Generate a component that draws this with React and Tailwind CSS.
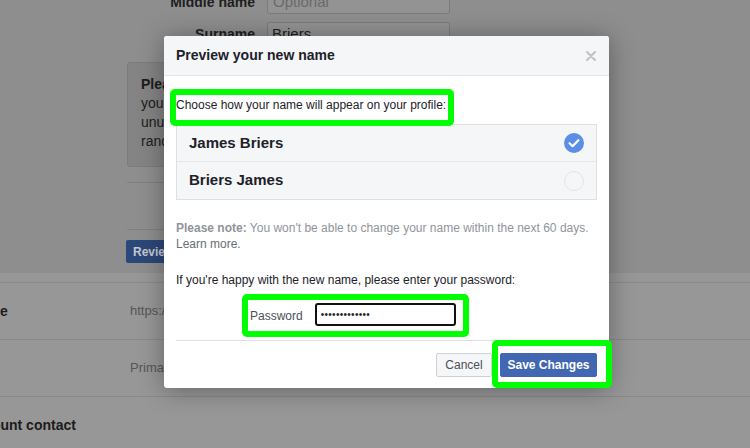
import React from "react";

function CheckedRadio() {
  return (
    <svg width="20" height="20" viewBox="0 0 20 20">
      <circle cx="10" cy="10" r="10" fill="#5b8ee6" />
      <path d="M5.6 10.2l3 3 5.8-6" fill="none" stroke="#fff" strokeWidth="2.2" strokeLinecap="round" strokeLinejoin="round" />
    </svg>
  );
}

function EmptyRadio() {
  return <span className="block w-[20px] h-[20px] rounded-full border-[1.5px] border-[#e3e5e8]" />;
}

function NameOption({ name, checked, last }) {
  return (
    <div className={`flex h-[37px] items-center justify-between pl-[12px] pr-[12px] ${last ? "" : "border-b border-[#e5e6e9]"}`}>
      <span className="text-[15px] font-bold text-[#1d2129]">{name}</span>
      {checked ? <CheckedRadio /> : <EmptyRadio />}
    </div>
  );
}

function Highlight({ className }) {
  // green annotation boxes drawn on top of the screenshot
  return <div className={`absolute border-[6px] border-[#00ff00] rounded-[5px] pointer-events-none ${className}`} />;
}

export default function App() {
  return (
    <div className="relative w-[750px] h-[448px] overflow-hidden bg-[#8e8e8e] font-['Liberation_Sans',Arial,sans-serif]">
      {/* Settings page behind the dimmed overlay */}
      <div className="flex h-[273px] flex-col items-start">
        <div className="-mt-[10px] flex items-center gap-[12px]">
          <span className="w-[255px] text-right text-[14px] font-bold text-[#1e1e1e]">Middle name</span>
          <div className="w-[183px] h-[24px] rounded-[3px] border border-[#7b7b7b] bg-[#939393] px-[5px] text-[15px] leading-[22px] text-[#6a6a6a]">
            Optional
          </div>
        </div>
        <div className="mt-[8px] flex items-center gap-[12px]">
          <span className="w-[255px] text-right text-[14px] font-bold text-[#1e1e1e]">Surname</span>
          <div className="w-[183px] h-[24px] rounded-[3px] border border-[#7b7b7b] bg-[#939393] px-[4px] text-[15px] leading-[22px] text-[#1e1e1e]">
            Briers
          </div>
        </div>
        <div className="ml-[127px] mt-[16px] w-[330px] h-[105px] rounded-[3px] border border-[#7c7c7c] bg-[#848484] px-[13px] pt-[12px] text-[14px] leading-[19px] text-[#1c1c1c]">
          <p className="font-bold">Please note</p>
          <p>you can only change your name</p>
          <p>unusual capitalisation</p>
          <p>random characters</p>
        </div>
        <div className="ml-[127px] mt-[15px] w-[330px] border-t border-[#7f7f7f]" />
        <div className="ml-[127px] mt-[46px] w-[330px] border-t border-[#7f7f7f]" />
        <div className="ml-[126px] mt-[10px] flex h-[23px] items-center rounded-[2px] bg-[#2c4779] px-[7px] text-[12px] font-bold text-[#c5c9d2]">
          Review change
        </div>
      </div>

      <div className="bg-[#979797] pt-[9px] h-[175px]">
        <div className="flex h-[57px] items-center border-t border-[#8a8a8a]">
          <span className="w-[130px] shrink-0 whitespace-nowrap text-[14px] font-bold text-[#1c1c1c]">
            <span className="-ml-[60px] inline-block">Username</span>
          </span>
          <span className="text-[13px] text-[#555]">https://www.facebook.com/james.briers</span>
        </div>
        <div className="flex h-[57px] items-center border-t border-[#8a8a8a]">
          <span className="w-[130px] shrink-0 whitespace-nowrap text-[14px] font-bold text-[#1c1c1c]">
            <span className="-ml-[80px] inline-block">Contact</span>
          </span>
          <span className="text-[13px] text-[#555]">Primary: james@example.com</span>
        </div>
        <div className="flex h-[57px] items-center border-t border-[#8a8a8a]">
          <span className="w-[130px] shrink-0 whitespace-nowrap text-[14px] font-bold text-[#1c1c1c]">
            <span className="-ml-[54px] inline-block">Ad account contact</span>
          </span>
        </div>
      </div>

      {/* Modal */}
      <div className="absolute left-[164px] top-[36px] w-[445px] rounded-[3px] bg-white shadow-[0_2px_26px_rgba(0,0,0,0.35)]">
        <div className="flex h-[40px] items-center justify-between border-b border-[#e5e5e5] bg-[#f5f6f7] rounded-t-[3px] pl-[12px] pr-[13px]">
          <h2 className="text-[14px] font-bold text-[#1d2129]">Preview your new name</h2>
          <svg width="10" height="10" viewBox="0 0 10 10">
            <path d="M1 1l8 8M9 1l-8 8" stroke="#bec2c9" strokeWidth="2" strokeLinecap="round" />
          </svg>
        </div>

        <div className="px-[12px]">
          <p className="pt-[21px] text-[12px] leading-[16px] text-[#1d2129]">
            Choose how your name will appear on your profile:
          </p>
          <div className="mt-[11px] border border-[#dddfe2] bg-[#f5f6f7]">
            <NameOption name="James Briers" checked />
            <NameOption name="Briers James" last />
          </div>

          <p className="mt-[20px] text-[12px] leading-[16px] text-[#90949c]">
            <span className="font-bold">Please note:</span> You won't be able to change your name within the next 60 days.
            <br />
            <span className="text-[#686d76]">Learn more.</span>
          </p>

          <p className="mt-[20px] text-[12px] leading-[16px] text-[#1d2129]">
            If you're happy with the new name, please enter your password:
          </p>

          <div className="mt-[15px] flex items-center gap-[12px] pl-[74px]">
            <span className="pt-[3px] text-[12px] text-[#4b4f56]">Password</span>
            <div className="flex w-[141px] h-[23px] items-center rounded-[3px] border-2 border-[#111] pl-[4px] text-[10px] tracking-[0.3px] text-[#1d2129]">
              •••••••••••••
            </div>
          </div>

          <div className="mt-[14px] border-t border-[#dddfe2]" />
        </div>

        <div className="flex justify-end gap-[8px] px-[12px] pt-[12px] pb-[11px]">
          <button className="h-[24px] w-[56px] rounded-[2px] border border-[#ced0d4] bg-[#f5f6f7] text-[12px] text-[#4b4f56]">
            Cancel
          </button>
          <button className="h-[24px] w-[97px] rounded-[2px] border border-[#4267b2] bg-[#4267b2] text-[12px] font-bold text-white">
            Save Changes
          </button>
        </div>
      </div>

      <Highlight className="left-[170px] top-[89px] w-[284px] h-[37px]" />
      <Highlight className="left-[242px] top-[294px] w-[227px] h-[43px]" />
      <Highlight className="left-[492px] top-[340px] w-[120px] h-[48px]" />
    </div>
  );
}
